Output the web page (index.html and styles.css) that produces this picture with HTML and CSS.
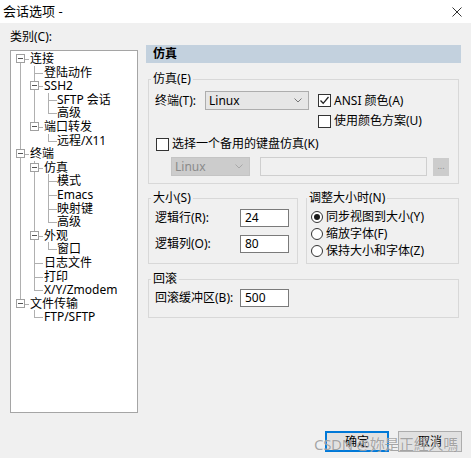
FILE: index.html
```html
<!DOCTYPE html>
<html lang="zh-CN">
<head>
    <meta charset="UTF-8">
    <title>会话选项</title>
    <link rel="stylesheet" href="styles.css">
</head>
<body>
    <div class="window">
        <div class="titlebar">
            <span class="title">会话选项 -</span>
            <svg class="close" viewBox="0 0 10 10">
                <path d="M0.5 0.5 L9.5 9.5 M9.5 0.5 L0.5 9.5"/>
            </svg>
        </div>

        <div class="content">
            <div class="category">
                <div class="cat-label">类别(C):</div>
                <div class="tree">
                    <ul>
                        <li class="open"><span class="exp"></span><span class="node">连接</span>
                            <ul>
                                <li><span class="node">登陆动作</span></li>
                                <li class="open"><span class="exp"></span><span class="node">SSH2</span>
                                    <ul>
                                        <li><span class="node">SFTP 会话</span></li>
                                        <li><span class="node">高级</span></li>
                                    </ul>
                                </li>
                                <li class="open"><span class="exp"></span><span class="node">端口转发</span>
                                    <ul>
                                        <li><span class="node">远程/X11</span></li>
                                    </ul>
                                </li>
                            </ul>
                        </li>
                        <li class="open"><span class="exp"></span><span class="node">终端</span>
                            <ul>
                                <li class="open"><span class="exp"></span><span class="node">仿真</span>
                                    <ul>
                                        <li><span class="node">模式</span></li>
                                        <li><span class="node">Emacs</span></li>
                                        <li><span class="node">映射键</span></li>
                                        <li><span class="node">高级</span></li>
                                    </ul>
                                </li>
                                <li class="open"><span class="exp"></span><span class="node">外观</span>
                                    <ul>
                                        <li><span class="node">窗口</span></li>
                                    </ul>
                                </li>
                                <li><span class="node">日志文件</span></li>
                                <li><span class="node">打印</span></li>
                                <li><span class="node">X/Y/Zmodem</span></li>
                            </ul>
                        </li>
                        <li class="open"><span class="exp"></span><span class="node">文件传输</span>
                            <ul>
                                <li><span class="node">FTP/SFTP</span></li>
                            </ul>
                        </li>
                    </ul>
                </div>
            </div>

            <div class="panel">
                <div class="panel-head">仿真</div>

                <fieldset class="group g-emu">
                    <legend>仿真(E)</legend>
                    <div class="row r-term">
                        <span class="lbl">终端(T):</span>
                        <div class="combo">
                            <span>Linux</span>
                            <svg class="chev" viewBox="0 0 8 5"><path d="M0.5 0.5 L4 4 L7.5 0.5"/></svg>
                        </div>
                        <span class="check on"><i><svg viewBox="0 0 11 11"><path d="M1.5 5.5 L4.2 8.3 L9.5 2"/></svg></i>ANSI 颜色(A)</span>
                    </div>
                    <div class="row r-scheme">
                        <span class="check"><i></i>使用颜色方案(U)</span>
                    </div>
                    <div class="row r-alt">
                        <span class="check"><i></i>选择一个备用的键盘仿真(K)</span>
                    </div>
                    <div class="row r-keymap">
                        <div class="combo disabled">
                            <span>Linux</span>
                            <svg class="chev" viewBox="0 0 8 5"><path d="M0.5 0.5 L4 4 L7.5 0.5"/></svg>
                        </div>
                        <div class="field disabled"></div>
                        <div class="dots">...</div>
                    </div>
                </fieldset>

                <div class="pair">
                    <fieldset class="group g-size">
                        <legend>大小(S)</legend>
                        <div class="row r-input">
                            <span class="lbl wide">逻辑行(R):</span>
                            <div class="input">24</div>
                        </div>
                        <div class="row r-input second">
                            <span class="lbl wide">逻辑列(O):</span>
                            <div class="input">80</div>
                        </div>
                    </fieldset>
                    <fieldset class="group g-resize">
                        <legend>调整大小时(N)</legend>
                        <div class="row r-radio"><span class="radio on"><i></i>同步视图到大小(Y)</span></div>
                        <div class="row r-radio"><span class="radio"><i></i>缩放字体(F)</span></div>
                        <div class="row r-radio"><span class="radio"><i></i>保持大小和字体(Z)</span></div>
                    </fieldset>
                </div>

                <fieldset class="group g-scroll">
                    <legend>回滚</legend>
                    <div class="row r-input">
                        <span class="lbl wide">回滚缓冲区(B):</span>
                        <div class="input">500</div>
                    </div>
                </fieldset>
            </div>
        </div>

        <div class="footer">
            <button class="btn btn-default">确定</button>
            <button class="btn">取消</button>
        </div>

        <div class="watermark">CSDN @妳是正經人嗎</div>
    </div>
</body>
</html>
```

FILE: styles.css
```css
* {
    margin: 0;
    padding: 0;
    box-sizing: border-box;
}

body {
    background: #fff;
    font-family: "Noto Sans", "Noto Sans CJK SC", sans-serif;
    font-size: 12px;
    color: #000;
}

.window {
    position: relative;
    width: 471px;
    height: 458px;
    background: #f0f0f0;
}

/* title bar */
.titlebar {
    height: 23px;
    background: #fff;
    display: flex;
    align-items: center;
    justify-content: space-between;
    padding: 0 12px 0 3px;
    width: 474px;
}

.title {
    font-size: 13px;
    line-height: 23px;
}

.close {
    width: 10px;
    height: 10px;
    stroke: #333;
    stroke-width: 1;
    fill: none;
}

/* main area */
.content {
    display: flex;
    padding: 7px 0 0 10px;
}

.category {
    width: 128px;
}

.cat-label {
    height: 20px;
    line-height: 14px;
}

.tree {
    height: 363px;
    background: #fff;
    border: 1px solid #a5a5a5;
    padding: 1px 0 0 9px;
}

.tree ul {
    list-style: none;
}

.tree ul ul {
    margin-left: 4px;
}

.tree li {
    position: relative;
    padding-left: 10px;
}

.tree li::before {
    content: "";
    position: absolute;
    left: 0;
    top: 0;
    width: 8px;
    height: 7px;
    border-left: 1px solid #b0b0b0;
    border-bottom: 1px solid #b0b0b0;
}

.tree li::after {
    content: "";
    position: absolute;
    left: 0;
    top: 7px;
    bottom: 0;
    border-left: 1px solid #b0b0b0;
}

.tree li:last-child::after {
    display: none;
}

.tree > ul > li:first-child::before {
    top: 7px;
    height: 0;
}

.tree ul ul ul li {
    padding-left: 9px;
}

.tree .node {
    display: block;
    height: 13.6px;
    line-height: 13.6px;
    white-space: nowrap;
}

.tree .exp {
    position: absolute;
    left: -4px;
    top: 2px;
    width: 9px;
    height: 9px;
    border: 1px solid #a0a0a0;
    background: #fff;
    z-index: 1;
}

.tree .exp::after {
    content: "";
    position: absolute;
    left: 1px;
    top: 3px;
    width: 5px;
    height: 1px;
    background: #555;
}

/* right side */
.panel {
    width: 315px;
    margin: 15px 0 0 8px;
}

.panel-head {
    height: 18px;
    line-height: 18px;
    background: #c3d1de;
    padding-left: 7px;
    font-weight: 700;
    font-size: 12px;
}

.group {
    border: 1px solid #d8d8d8;
    margin: 9px 2px 0;
    min-width: 0;
}

.group legend {
    margin-left: -4px;
    padding: 0 2px;
    line-height: 14px;
}

.row {
    display: flex;
    align-items: center;
}

.lbl {
    width: 50px;
    line-height: 14px;
}

.lbl.wide {
    width: 85px;
}

.g-emu {
    padding: 5px 6px 7px;
}

.r-term {
    height: 19px;
}

.r-scheme {
    height: 16px;
    margin-top: 3px;
    padding-left: 163px;
}

.r-alt {
    height: 16px;
    margin-top: 7px;
    padding-left: 1px;
}

.r-keymap {
    height: 19px;
    margin-top: 5px;
    padding-left: 16px;
}

.combo {
    width: 104px;
    height: 19px;
    border: 1px solid #adadad;
    background: #e6e6e6;
    display: flex;
    align-items: center;
    justify-content: space-between;
    padding: 0 6px 0 3px;
    line-height: 14px;
}

.chev {
    width: 8px;
    height: 5px;
    fill: none;
    stroke: #777;
    stroke-width: 1;
}

.combo.disabled {
    width: 79px;
    background: #cccccc;
    border-color: #c4c4c4;
    color: #8a8a8a;
}

.combo.disabled .chev {
    stroke: #a8a8a8;
}

.field.disabled {
    width: 167px;
    height: 19px;
    margin-left: 10px;
    border: 1px solid #cfcfcf;
    background: #f0f0f0;
}

.dots {
    width: 16px;
    height: 18px;
    margin-left: 6px;
    background: #cccccc;
    color: #8f8f8f;
    font-size: 9px;
    line-height: 16px;
    text-align: center;
}

.r-term .check {
    margin-left: 9px;
}

.check,
.radio {
    display: flex;
    align-items: center;
    line-height: 14px;
    white-space: nowrap;
}

.check i {
    width: 13px;
    height: 13px;
    border: 1px solid #333;
    background: #fff;
    margin-right: 3px;
    display: flex;
    align-items: center;
    justify-content: center;
}

.check i svg {
    width: 11px;
    height: 11px;
    fill: none;
    stroke: #222;
    stroke-width: 1.3;
}

.pair {
    display: flex;
    gap: 8px;
    margin: 7px 2px 0;
}

.pair .group {
    margin: 0;
}

.g-size {
    width: 150px;
    padding: 4px 6px 10px;
}

.g-resize {
    flex: 1;
    padding: 3px 4px 0;
}

.r-input {
    height: 18px;
}

.r-input.second {
    margin-top: 8px;
}

.input {
    width: 49px;
    height: 18px;
    border: 1px solid #7a7a7a;
    background: #fff;
    padding-left: 4px;
    line-height: 16px;
}

.r-radio {
    height: 17px;
}

.radio i {
    position: relative;
    width: 12px;
    height: 12px;
    border: 1px solid #333;
    border-radius: 50%;
    background: #fff;
    margin-right: 3px;
}

.radio.on i::after {
    content: "";
    position: absolute;
    left: 2px;
    top: 2px;
    width: 6px;
    height: 6px;
    border-radius: 50%;
    background: #1a1a1a;
}

.g-scroll {
    margin-top: 8px;
    padding: 3px 6px 10px;
}

/* buttons */
.footer {
    display: flex;
    justify-content: flex-end;
    gap: 9px;
    margin-top: 18px;
    padding-right: 9px;
}

.btn {
    width: 64px;
    height: 21px;
    border: 1px solid #adadad;
    background: #e1e1e1;
    font-family: inherit;
    font-size: 12px;
    line-height: 14px;
}

.btn-default {
    border-color: #0078d7;
    box-shadow: inset 0 0 0 1px #0078d7;
}

.watermark {
    position: absolute;
    left: 314px;
    top: 434px;
    font-family: "Noto Sans", "Noto Sans CJK TC", sans-serif;
    font-size: 15px;
    letter-spacing: -0.3px;
    line-height: 20px;
    color: rgba(150, 150, 150, 0.85);
    text-shadow: 0 0 1px rgba(255, 255, 255, 0.6);
    white-space: nowrap;
}
```
